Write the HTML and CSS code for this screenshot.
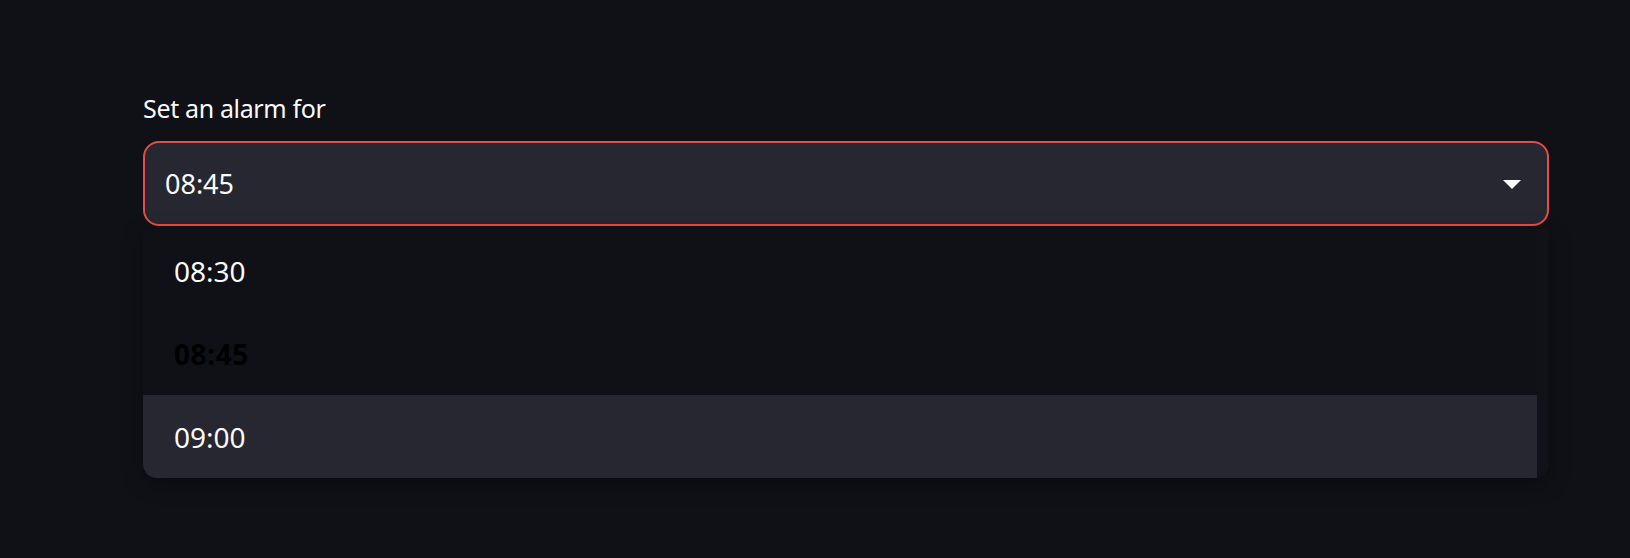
FILE: index.html
```html
<!DOCTYPE html>
<html lang="en">
<head>
<meta charset="utf-8">
<title>Set an alarm</title>
<link rel="stylesheet" href="styles.css">
</head>
<body>
<main class="main">
  <div class="field">
    <label class="label">Set an alarm for</label>
    <div class="select">
      <span class="select-value">08:45</span>
      <svg class="arrow" width="18" height="9" viewBox="0 0 18 9"><path d="M0 0 L18 0 L9 9 Z" fill="#ffffff"/></svg>
    </div>
    <div class="menu">
      <ul class="options">
        <li class="option">08:30</li>
        <li class="option option-selected">08:45</li>
        <li class="option option-hover">09:00</li>
      </ul>
      <div class="gutter"></div>
    </div>
  </div>
</main>
</body>
</html>
```
FILE: styles.css
```css
html, body {
  margin: 0;
  padding: 0;
  background: #0f1116;
  height: 100%;
}
body {
  font-family: "Noto Sans", "Open Sans", sans-serif;
  color: #fafafa;
}
.main {
  padding: 88px 81px 0 143px;
}
.field {
  position: relative;
  display: flex;
  flex-direction: column;
}
.label {
  font-size: 25px;
  letter-spacing: -0.35px;
  line-height: 40px;
  margin-bottom: 13px;
  color: #fafafa;
}
.select {
  box-sizing: border-box;
  height: 85px;
  border: 2px solid #e64c49;
  border-radius: 16px;
  background: #262730;
  display: flex;
  align-items: center;
  justify-content: space-between;
  padding: 0 26px 0 20px;
}
.select-value {
  font-size: 27px;
  color: #fafafa;
}
.arrow {
  display: block;
  margin-top: 2px;
}
.menu {
  position: absolute;
  left: 0;
  right: 0;
  top: 141px;
  display: flex;
  background: #0f1116;
  border-radius: 0 0 14px 14px;
  overflow: hidden;
  box-shadow: 0 6px 20px rgba(0, 0, 0, 0.35);
}
.options {
  list-style: none;
  margin: 0;
  padding: 0;
  flex: 1;
}
.option {
  height: 83px;
  display: flex;
  align-items: center;
  padding-left: 31px;
  font-size: 28px;
  color: #fafafa;
}
.option-selected {
  font-weight: 700;
  color: #000000;
  letter-spacing: 0.6px;
}
.option-hover {
  background: #262730;
}
.gutter {
  width: 12px;
  background: #111217;
}
```
